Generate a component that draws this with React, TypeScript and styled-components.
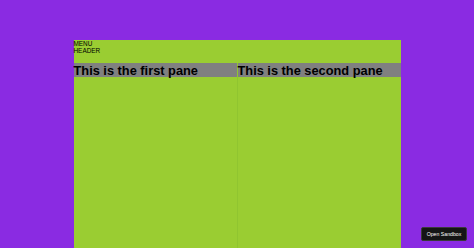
import styled, { createGlobalStyle } from 'styled-components'

const GlobalStyle = createGlobalStyle`
  html, body {
    margin: 0;
    padding: 0;
    background: #8a2be2;
    font-family: "Liberation Sans", Arial, sans-serif;
    overflow: hidden;
  }
`

const Page = styled.div`
  height: 248px;
  padding-top: 40px;
  box-sizing: border-box;
`

const Layout = styled.div`
  width: 327px;
  margin: 0 auto;
  height: 208px;
  background: #9acd32;
  display: flex;
  flex-direction: column;
`

const Menu = styled.div`
  font-size: 6.4px;
  line-height: 7px;
  color: #000;
  height: 23px;
`

const Panes = styled.div`
  display: flex;
  flex: 1;
`

const Pane = styled.div<{ $divider?: boolean }>`
  flex: 1;
  min-width: 0;
  border-left: ${(p) => (p.$divider ? '1px solid #90c530' : 'none')};
`

const PaneTitle = styled.h1`
  margin: 0;
  background: #808080;
  height: 14px;
  font-size: 12.8px;
  line-height: 15px;
  font-weight: bold;
  color: #000;
  white-space: nowrap;
`

const SandboxButton = styled.div`
  position: fixed;
  right: 7px;
  bottom: 7px;
  width: 46px;
  height: 14px;
  background: #151515;
  border: 1px solid #3a3a3a;
  border-radius: 2px;
  box-sizing: border-box;
  color: #fff;
  font-size: 5.2px;
  display: flex;
  align-items: center;
  justify-content: center;
`

export default function App() {
  return (
    <>
      <GlobalStyle />
      <Page>
        <Layout>
          <Menu>
            MENU
            <br />
            HEADER
          </Menu>
          <Panes>
            <Pane>
              <PaneTitle>This is the first pane</PaneTitle>
            </Pane>
            <Pane $divider>
              <PaneTitle>This is the second pane</PaneTitle>
            </Pane>
          </Panes>
        </Layout>
      </Page>
      <SandboxButton>Open Sandbox</SandboxButton>
    </>
  )
}
